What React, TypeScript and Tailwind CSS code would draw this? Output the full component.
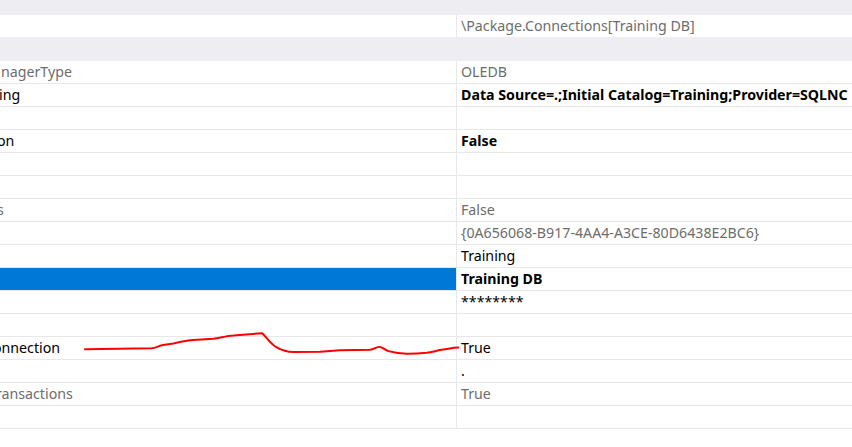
type Row = {
  name?: string;
  nameShift?: string;
  value?: string;
  kind?: "gray" | "bold" | "normal";
  nameGray?: boolean;
  selected?: boolean;
};

const rows: Row[] = [
  { name: "nagerType", nameShift: "ml-[1px]", nameGray: true, value: "OLEDB", kind: "gray" },
  { name: "ing", nameShift: "ml-[-1px]", value: "Data Source=.;Initial Catalog=Training;Provider=SQLNC", kind: "bold" },
  {},
  { name: "on", nameShift: "ml-[-3px]", value: "False", kind: "bold" },
  {},
  {},
  { name: "s", nameShift: "ml-[-3px]", nameGray: true, value: "False", kind: "gray" },
  { value: "{0A656068-B917-4AA4-A3CE-80D6438E2BC6}", kind: "gray" },
  { value: "Training", kind: "normal" },
  { selected: true, value: "Training DB", kind: "bold" },
  { value: "********", kind: "normal" },
  {},
  { name: "onnection", nameShift: "ml-[-7px]", value: "True", kind: "normal" },
  { value: ".", kind: "normal" },
  { name: "ransactions", nameShift: "ml-[-4px]", nameGray: true, value: "True", kind: "gray" },
  {},
];

const valueClass = {
  gray: "text-[#6d6d6d]",
  bold: "text-black font-bold",
  normal: "text-black",
};

function PropRow({ row }: { row: Row }) {
  return (
    <div className="flex h-[23px] border-b border-[#e8e8ec]">
      <div
        className={
          "w-[457px] shrink-0 overflow-hidden whitespace-nowrap flex items-center pt-px border-r border-[#e8e8ec] " +
          (row.selected ? "bg-[#0078d7]" : "")
        }
      >
        {row.name && (
          <span className={(row.nameShift ?? "") + " " + (row.nameGray ? "text-[#6d6d6d]" : "text-black")}>
            {row.name}
          </span>
        )}
      </div>
      <div className="flex-1 overflow-hidden whitespace-nowrap flex items-center pt-px pl-[4px]">
        {row.value && <span className={valueClass[row.kind ?? "normal"]}>{row.value}</span>}
      </div>
    </div>
  );
}

export default function App() {
  return (
    <div
      className="relative w-[852px] h-[447px] overflow-hidden bg-white text-[14.2px] leading-none"
      style={{ fontFamily: '"Noto Sans", "Open Sans", sans-serif' }}
    >
      <div className="h-[15px] bg-[#eeeef2]" />
      <div className="flex h-[22px]">
        <div className="w-[457px] shrink-0 border-r border-[#e8e8ec]" />
        <div className="flex-1 flex items-center pt-px pl-[4px] text-[#6d6d6d] whitespace-nowrap overflow-hidden">
          \Package.Connections[Training DB]
        </div>
      </div>
      <div className="h-[24px] bg-[#eeeef2]" />
      {rows.map((r, i) => (
        <PropRow key={i} row={r} />
      ))}

      <svg className="absolute left-0 top-0 pointer-events-none" width="852" height="447">
        <path
          d="M85 349.3 L151.7 348.3 C156 348 159 345.5 163.3 344.9 L173.3 343.4 C180 342 186 340.6 193.3 340.1 L213.3 338.8 C220 338 226 335.8 233.3 335.4 L261.7 333.2 C266 336 270 344 276.7 347.4 C282 350.5 287 352 293.3 352.1 L320 351.7 L340 350.2 L370 349.8 C374 349.5 377 346.5 380 346.9 C383 347.3 385 350.3 388.3 351.1 C394 352.6 400 353.6 406.7 353.7 C413 353.8 420 353.4 426.7 352.8 C433 352 437 350.4 443.3 349.6 C449 348.8 453 347.8 458.3 347.6"
          fill="none"
          stroke="#ff0000"
          strokeWidth="2"
          strokeLinecap="round"
          strokeLinejoin="round"
        />
      </svg>
    </div>
  );
}
